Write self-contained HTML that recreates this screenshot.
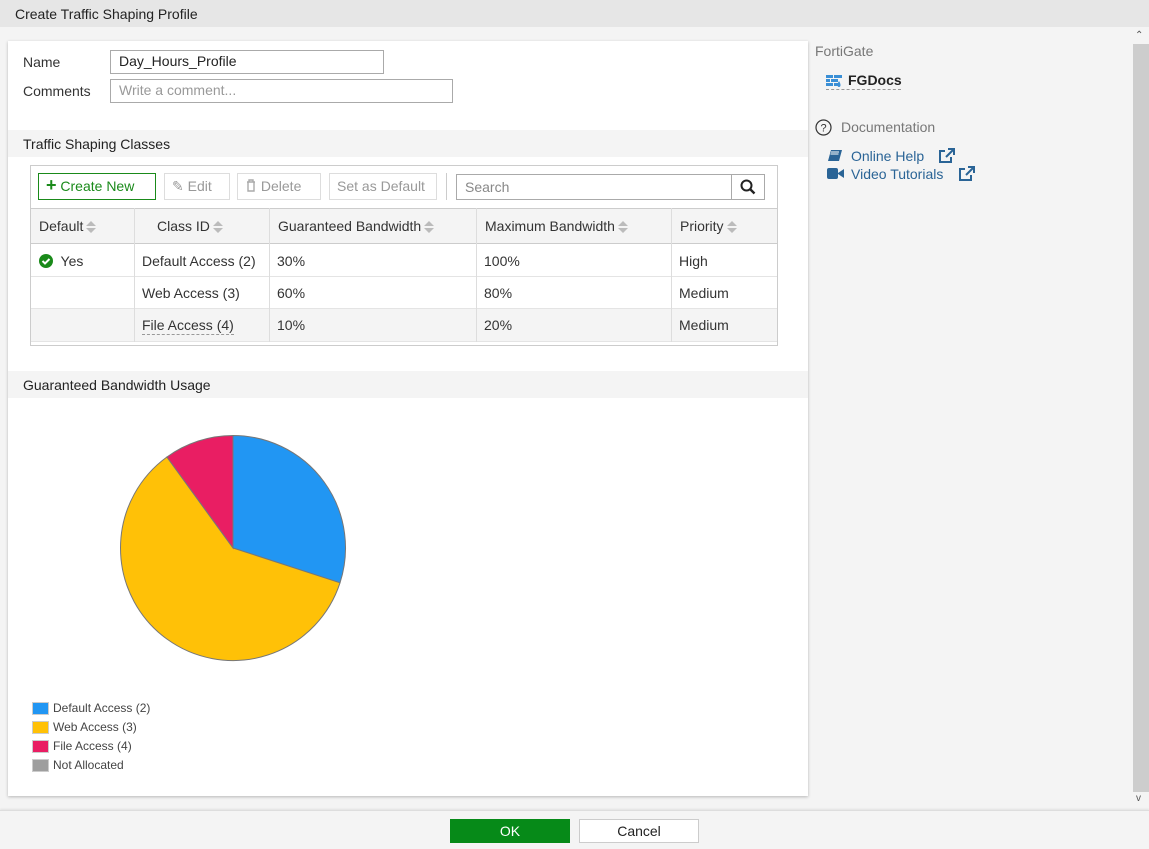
<!DOCTYPE html>
<html><head><meta charset="utf-8"><style>
*{box-sizing:border-box;margin:0;padding:0}
body{width:1149px;height:849px;overflow:hidden;background:#f4f4f4;font-family:"Liberation Sans",sans-serif;font-size:14px;color:#333;position:relative}
.a{position:absolute}
.hdr{left:0;top:0;width:1149px;height:27px;background:#e6e6e6;padding:6px 15px;font-size:14px;color:#222}
.card{left:8px;top:41px;width:800px;height:755px;background:#fff;box-shadow:0 1px 3px rgba(0,0,0,.25)}
.band{left:8px;width:800px;height:27px;background:#f4f4f4;padding:6px 15px;color:#222}
.inp{border:1px solid #aaa;background:#fff;padding:2px 8px}
.btn{border:1px solid #ddd;height:27px;top:173px;padding:4px 7px;color:#999;background:#fff}
.th,.td{position:absolute;padding:0 8px;line-height:32px;white-space:nowrap}
.sort{display:inline-block;width:10px;height:12px;vertical-align:middle;margin-left:3px}
.lg{left:32px;width:17px;height:13px;border:1px solid #ccc}
.lt{left:53px;font-size:12px;color:#444}
</style></head><body>
<div class="a hdr">Create Traffic Shaping Profile</div>
<div class="a card"></div>
<div class="a" style="left:23px;top:54px">Name</div>
<div class="a inp" style="left:110px;top:50px;width:274px;height:24px;color:#222">Day_Hours_Profile</div>
<div class="a" style="left:23px;top:83px">Comments</div>
<div class="a inp" style="left:110px;top:79px;width:343px;height:24px;color:#999">Write a comment...</div>
<div class="a band" style="top:130px">Traffic Shaping Classes</div>
<div class="a" style="left:30px;top:165px;width:748px;height:181px;border:1px solid #ccc;background:#fff"></div>
<div class="a btn" style="left:38px;width:118px;border-color:#1a8a1a;color:#1a8a1a"><b style="font-size:18px;line-height:14px">+</b> Create New</div>
<div class="a btn" style="left:164px;width:66px">✎ Edit</div>
<div class="a btn" style="left:237px;width:84px"><svg width="12" height="13" style="vertical-align:-1px"><path d="M2 3h8M4 3V1h4v2M3 3v9h6V3" stroke="#aaa" fill="none" stroke-width="1.4"/></svg> Delete</div>
<div class="a btn" style="left:329px;width:108px">Set as Default</div>
<div class="a" style="left:446px;top:173px;width:1px;height:27px;background:#ccc"></div>
<div class="a inp" style="left:456px;top:174px;width:309px;height:26px;color:#888;padding-top:4px">Search</div>
<div class="a" style="left:731px;top:174px;width:1px;height:26px;background:#aaa"></div>
<svg class="a" style="left:740px;top:179px" width="16" height="16"><circle cx="6.5" cy="6.5" r="5" stroke="#222" stroke-width="2" fill="none"/><path d="M10 10l4.5 4.5" stroke="#222" stroke-width="2.4"/></svg>
<div class="a" style="left:31px;top:208px;width:746px;height:36px;background:#f4f4f4;border-top:1px solid #ccc;border-bottom:1px solid #ccc"></div>
<div class="a" style="left:31px;top:309px;width:746px;height:32px;background:#f4f4f4"></div>
<div class="a" style="left:31px;top:276px;width:746px;height:1px;background:#e4e4e4"></div>
<div class="a" style="left:31px;top:308px;width:746px;height:1px;background:#e4e4e4"></div>
<div class="a" style="left:31px;top:341px;width:746px;height:1px;background:#e4e4e4"></div>
<div class="a" style="left:134px;top:208px;width:1px;height:134px;background:#ddd"></div>
<div class="a" style="left:269px;top:208px;width:1px;height:134px;background:#ddd"></div>
<div class="a" style="left:476px;top:208px;width:1px;height:134px;background:#ddd"></div>
<div class="a" style="left:671px;top:208px;width:1px;height:134px;background:#ddd"></div>
<div style="position:absolute;left:0;top:210px">
<div class="th" style="left:31px">Default<svg class="sort"><path d="M0 5l5-5 5 5zM0 7l5 5 5-5z" fill="#bbb"/></svg></div>
<div class="th" style="left:149px">Class ID<svg class="sort"><path d="M0 5l5-5 5 5zM0 7l5 5 5-5z" fill="#bbb"/></svg></div>
<div class="th" style="left:270px">Guaranteed Bandwidth<svg class="sort"><path d="M0 5l5-5 5 5zM0 7l5 5 5-5z" fill="#bbb"/></svg></div>
<div class="th" style="left:477px">Maximum Bandwidth<svg class="sort"><path d="M0 5l5-5 5 5zM0 7l5 5 5-5z" fill="#bbb"/></svg></div>
<div class="th" style="left:672px">Priority<svg class="sort"><path d="M0 5l5-5 5 5zM0 7l5 5 5-5z" fill="#bbb"/></svg></div>
</div>
<div style="position:absolute;left:0;top:245px">
<div class="td" style="left:31px"><svg width="14" height="14" style="vertical-align:-2px"><circle cx="7" cy="7" r="7" fill="#1a8a1a"/><path d="M3.5 7l2.5 2.5 4.5-4.5" stroke="#fff" stroke-width="2" fill="none"/></svg>&nbsp; Yes</div>
<div class="td" style="left:134px">Default Access (2)</div><div class="td" style="left:269px">30%</div><div class="td" style="left:476px">100%</div><div class="td" style="left:671px">High</div>
</div>
<div style="position:absolute;left:0;top:277px">
<div class="td" style="left:134px">Web Access (3)</div><div class="td" style="left:269px">60%</div><div class="td" style="left:476px">80%</div><div class="td" style="left:671px">Medium</div>
</div>
<div style="position:absolute;left:0;top:309px">
<div class="td" style="left:134px"><span style="border-bottom:1px dashed #999;line-height:18px;display:inline-block">File Access (4)</span></div><div class="td" style="left:269px">10%</div><div class="td" style="left:476px">20%</div><div class="td" style="left:671px">Medium</div>
</div>
<div class="a band" style="top:371px">Guaranteed Bandwidth Usage</div>
<svg class="a" style="left:0;top:0" width="400" height="700">
<g stroke="#777" stroke-width="1">
<path d="M233 548L233 435.5A112.5 112.5 0 0 1 340 582.8Z" fill="#2196f3"/>
<path d="M233 548L340 582.8A112.5 112.5 0 1 1 166.9 457Z" fill="#ffc107"/>
<path d="M233 548L166.9 457A112.5 112.5 0 0 1 233 435.5Z" fill="#e91e63"/>
</g></svg>
<div class="a lg" style="top:702px;background:#2196f3"></div><div class="a lt" style="top:701px">Default Access (2)</div>
<div class="a lg" style="top:721px;background:#ffc107"></div><div class="a lt" style="top:720px">Web Access (3)</div>
<div class="a lg" style="top:740px;background:#e91e63"></div><div class="a lt" style="top:739px">File Access (4)</div>
<div class="a lg" style="top:759px;background:#9e9e9e"></div><div class="a lt" style="top:758px">Not Allocated</div>
<div class="a" style="left:815px;top:43px;color:#777">FortiGate</div>
<svg class="a" style="left:826px;top:75px" width="17" height="13"><g fill="#3a8fd6"><rect x="0" y="0" width="7" height="3"/><rect x="8" y="0" width="8" height="3"/><rect x="0" y="4" width="4" height="3"/><rect x="5" y="4" width="7" height="3"/><rect x="0" y="8" width="7" height="3"/><rect x="8" y="8" width="4" height="3"/></g><path d="M13 12c-2 0-2-3 0-6 2 3 2 6 0 6z" fill="#3a8fd6"/></svg>
<div class="a" style="left:848px;top:72px;font-weight:bold;color:#222">FGDocs</div>
<div class="a" style="left:826px;top:89px;width:75px;border-top:1px dashed #999"></div>
<svg class="a" style="left:815px;top:119px" width="17" height="17"><circle cx="8.5" cy="8.5" r="7.5" stroke="#333" fill="none" stroke-width="1.2"/><text x="8.5" y="12.5" font-size="11" text-anchor="middle" fill="#333" font-family="Liberation Sans">?</text></svg>
<div class="a" style="left:841px;top:119px;color:#777">Documentation</div>
<svg class="a" style="left:827px;top:149px" width="16" height="14"><path d="M4 1h11l-3 11H1z" fill="#2a6496"/><path d="M4 3h8M3.5 5h8" stroke="#fff"/></svg>
<div class="a" style="left:851px;top:148px;color:#2a6496">Online Help</div>
<svg class="a" style="left:938px;top:148px" width="17" height="16"><path d="M7 3H2v11h11V9" stroke="#2a6496" stroke-width="2" fill="none"/><path d="M10 1h6v6M16 1L8 9" stroke="#2a6496" stroke-width="2" fill="none"/></svg>
<svg class="a" style="left:827px;top:167px" width="17" height="13"><rect x="0" y="1" width="11" height="11" rx="2" fill="#2a6496"/><path d="M11 6l6-4v9l-6-4z" fill="#2a6496"/></svg>
<div class="a" style="left:851px;top:166px;color:#2a6496">Video Tutorials</div>
<svg class="a" style="left:958px;top:166px" width="17" height="16"><path d="M7 3H2v11h11V9" stroke="#2a6496" stroke-width="2" fill="none"/><path d="M10 1h6v6M16 1L8 9" stroke="#2a6496" stroke-width="2" fill="none"/></svg>
<div class="a" style="left:1133px;top:28px;width:16px;height:782px;background:#f4f4f4"></div>
<div class="a" style="left:1133px;top:44px;width:16px;height:748px;background:#cdcdcd"></div>
<div class="a" style="left:1135px;top:30px;font-size:10px;color:#555">&#8963;</div>
<div class="a" style="left:1136px;top:793px;font-size:10px;color:#555">v</div>
<div class="a" style="left:0;top:810px;width:1149px;height:39px;background:#f4f4f4;border-top:1px solid #ddd;box-shadow:0 -1px 2px rgba(0,0,0,.08)"></div>
<div class="a" style="left:450px;top:819px;width:120px;height:24px;background:#068a18;color:#fff;text-align:center;line-height:24px">OK</div>
<div class="a" style="left:579px;top:819px;width:120px;height:24px;background:#fff;border:1px solid #ccc;color:#222;text-align:center;line-height:22px">Cancel</div>
</body></html>
